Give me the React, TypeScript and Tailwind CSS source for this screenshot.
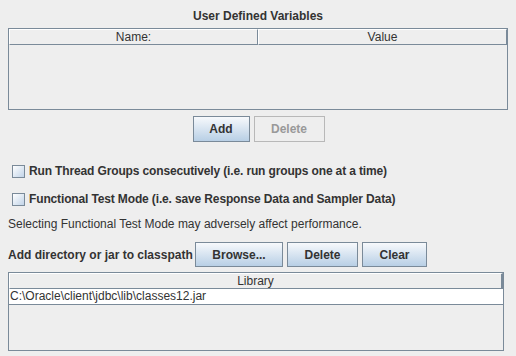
import React from "react";

const btn =
  "h-[26px] border border-[#7a8a99] bg-gradient-to-b from-[#f7f9fc] to-[#b8cfe5] font-bold text-[#333333] flex items-center justify-center shrink-0";

function Checkbox({ label }: { label: string }) {
  return (
    <div className="h-[20px] flex items-center pl-[12px]">
      <div className="w-[13px] h-[13px] border border-[#7a8a99] bg-gradient-to-br from-white to-[#c2d4e8] shrink-0" />
      <span className="ml-[4px] font-bold leading-[14px] tracking-[-0.14px] whitespace-nowrap">{label}</span>
    </div>
  );
}

export default function App() {
  return (
    <div className="w-[516px] h-[356px] bg-[#eeeeee] overflow-hidden flex flex-col font-['Liberation_Sans',Arial,sans-serif] text-[12px] text-[#333333]">
      {/* title */}
      <div className="mt-[9px] h-[14px] leading-[14px] text-center font-bold">
        User Defined Variables
      </div>

      {/* variables table */}
      <div className="mt-[5px] ml-[8px] w-[500px] h-[82px] border border-[#7a8a99] flex flex-col">
        <div className="h-[16px] flex shrink-0">
          <div className="w-[249px] border-t border-l border-t-white border-l-white border-r border-b border-r-[#7a8a99] border-b-[#7a8a99] leading-[14px] text-center">
            Name:
          </div>
          <div className="w-[249px] border-t border-l border-t-white border-l-white border-r border-b border-r-[#7a8a99] border-b-[#7a8a99] leading-[14px] text-center">
            Value
          </div>
        </div>
        <div className="flex-1" />
      </div>

      {/* add / delete */}
      <div className="mt-[6px] flex justify-center gap-[4px] pl-[1px]">
        <div className={`${btn} w-[57px]`}>Add</div>
        <div className="h-[26px] w-[71px] border border-[#b8b8b8] flex items-center justify-center font-bold text-[#999999]">
          Delete
        </div>
      </div>

      <div className="mt-[19px]">
        <Checkbox label="Run Thread Groups consecutively (i.e. run groups one at a time)" />
      </div>
      <div className="mt-[8px]">
        <Checkbox label="Functional Test Mode (i.e. save Response Data and Sampler Data)" />
      </div>

      <div className="mt-[8px] h-[14px] leading-[14px] pl-[8px] whitespace-nowrap">
        Selecting Functional Test Mode may adversely affect performance.
      </div>

      {/* classpath */}
      <div className="mt-[11px] h-[25px] flex items-center pl-[8px]">
        <div className="w-[187px] font-bold whitespace-nowrap leading-[14px]">
          Add directory or jar to classpath
        </div>
        <div className="flex gap-[4px]">
          <div className={`${btn} !h-[25px] w-[88px]`}>Browse...</div>
          <div className={`${btn} !h-[25px] w-[71px]`}>Delete</div>
          <div className={`${btn} !h-[25px] w-[65px]`}>Clear</div>
        </div>
      </div>

      {/* library table */}
      <div className="mt-[5px] ml-[8px] w-[496px] h-[79px] border border-[#7a8a99] flex flex-col">
        <div className="h-[16px] shrink-0 border-t border-l border-t-white border-l-white border-r-2 border-b border-r-[#7a8a99] border-b-[#7a8a99] leading-[14px] text-center">
          Library
        </div>
        <div className="h-[16px] shrink-0 bg-white border-b border-b-[#7a8a99] leading-[15px] pl-[1px] whitespace-nowrap">
          C:\Oracle\client\jdbc\lib\classes12.jar
        </div>
        <div className="flex-1" />
      </div>
    </div>
  );
}
